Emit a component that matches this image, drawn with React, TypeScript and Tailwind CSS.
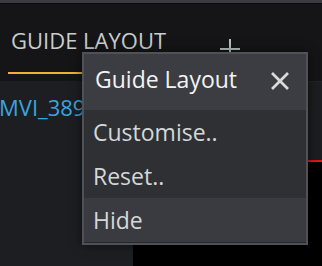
import React from "react";

const font = { fontFamily: '"Open Sans", "Noto Sans", sans-serif' };

function PlusIcon() {
  return (
    <svg width="22" height="22" viewBox="0 0 22 22" className="block">
      <line x1="11" y1="1" x2="11" y2="21" stroke="#b9bebe" strokeWidth="2" />
      <line x1="1" y1="11" x2="21" y2="11" stroke="#b9bebe" strokeWidth="2" />
    </svg>
  );
}

function CloseIcon() {
  return (
    <svg width="20" height="20" viewBox="0 0 20 20" className="block">
      <line x1="2" y1="2" x2="18" y2="18" stroke="#d9dbdb" strokeWidth="2.6" />
      <line x1="18" y1="2" x2="2" y2="18" stroke="#d9dbdb" strokeWidth="2.6" />
    </svg>
  );
}

const items = ["Customise..", "Reset..", "Hide"];

export default function App() {
  return (
    <div
      className="relative w-[322px] h-[266px] overflow-hidden bg-[#1c1d20] flex flex-col"
      style={font}
    >
      {/* window strip */}
      <div className="h-[3px] bg-[#3c3b42]" />
      <div className="h-px bg-[#0c0c0e]" />

      {/* tab bar */}
      <div className="h-[77px] bg-[#151517] flex items-start">
        <div className="ml-[8px] px-[3px] pt-[21px] pb-[17px] border-b-2 border-[#f0b232]">
          <span className="block text-[22px] leading-[30px] font-medium text-[#c8cdcd] whitespace-nowrap">
            GUIDE LAYOUT
          </span>
        </div>
        <div className="ml-[50px] mt-[34px]">
          <PlusIcon />
        </div>
      </div>

      {/* content */}
      <div className="flex flex-1">
        <div className="w-[133px] bg-[#1d1e21] overflow-hidden pt-[11px]">
          <span className="block text-[22px] leading-[30px] text-[#3aa4de] whitespace-nowrap -ml-[1px]">
            MVI_3895
          </span>
        </div>
        <div className="flex-1 flex flex-col">
          <div className="h-[79px] bg-[#1c1d20] border-t border-[#222326]" />
          <div className="h-[2px] bg-[#e21414]" />
          <div className="flex-1 bg-black" />
        </div>
      </div>

      {/* popup menu */}
      <div className="absolute left-[82px] top-[52px] w-[226px] border-2 border-[#505156] bg-[#2f3034] shadow-[0_0_10px_rgba(0,0,0,0.55)]">
        <div className="h-[56px] bg-[#3c3d42] flex items-start justify-between pl-[11px] pr-[16px]">
          <span className="pt-[10px] text-[23px] leading-[30px] font-medium text-[#f3f3f3] whitespace-nowrap">
            Guide Layout
          </span>
          <div className="mt-[17px]">
            <CloseIcon />
          </div>
        </div>
        {items.map((label) => (
          <div
            key={label}
            className={`h-[44px] pl-[9px] pt-[7px] ${label === "Hide" ? "bg-[#3a3b40]" : ""}`}
          >
            <span className="block text-[23px] leading-[30px] text-[#d3d8d8] whitespace-nowrap">
              {label}
            </span>
          </div>
        ))}
        <div className="h-px bg-[#27282b]" />
      </div>
    </div>
  );
}
